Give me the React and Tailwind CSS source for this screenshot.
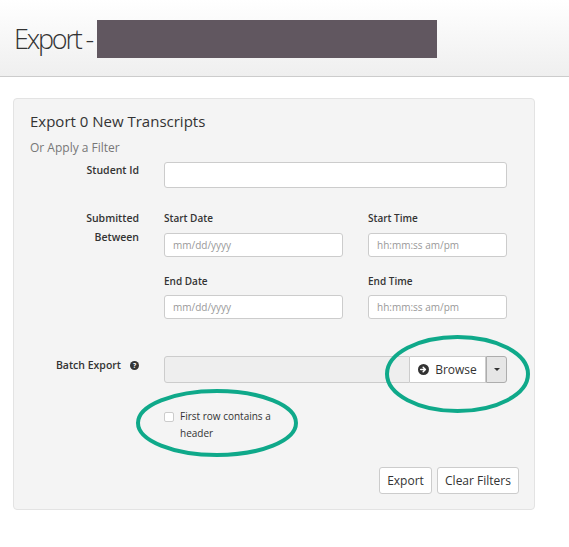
import React from "react";

function ArrowCircle() {
  return (
    <svg width="11" height="11" viewBox="0 0 16 16" className="shrink-0">
      <circle cx="8" cy="8" r="8" fill="#333" />
      <path d="M4 8h6.5M7.5 4.8 10.8 8 7.5 11.2" stroke="#fff" strokeWidth="2.2" fill="none" strokeLinecap="round" strokeLinejoin="round" />
    </svg>
  );
}

function HelpCircle() {
  return (
    <svg width="9" height="9" viewBox="0 0 16 16" className="shrink-0">
      <circle cx="8" cy="8" r="8" fill="#333" />
      <text x="8" y="12.3" textAnchor="middle" fontSize="12" fontWeight="700" fill="#fff" fontFamily="'Open Sans', sans-serif">?</text>
    </svg>
  );
}

function TextBox({ placeholder, className }) {
  return (
    <div className={`bg-white border border-[#ccc] rounded-[3px] flex items-center pl-[8px] text-[10px] text-[#999] ${className}`}>
      {placeholder}
    </div>
  );
}

function Label({ children, className = "" }) {
  return (
    <div className={`w-[109px] shrink-0 text-right text-[10.5px] font-semibold text-[#333] ${className}`}>
      {children}
    </div>
  );
}

export default function App() {
  return (
    <div className="relative w-[569px] h-[547px] bg-white font-['Open_Sans',sans-serif] text-[#333]">
      <header className="h-[77px] border-b border-[#ccc] bg-gradient-to-b from-white to-[#efefef] flex items-start pl-[14px] pt-[20px]">
        <h1 className="text-[27px] font-light leading-[38px] tracking-[-2.2px] text-[#333]">Export -</h1>
        <div className="ml-[5px] w-[340px] h-[38px] bg-[#615760]" />
      </header>

      <section className="ml-[13px] mt-[21px] w-[522px] h-[412px] bg-[#f4f4f4] border border-[#e3e3e3] rounded-[4px] pl-[16px] pr-[15px] pt-[12px]">
        <h2 className="text-[15px] leading-[21px] text-[#333]">Export 0 New Transcripts</h2>
        <p className="mt-[7px] text-[12px] leading-[17px] text-[#777]">Or Apply a Filter</p>

        <div className="mt-[6px] flex">
          <Label className="leading-[16px]">Student Id</Label>
          <div className="ml-[25px] w-[343px] h-[26px] bg-white border border-[#ccc] rounded-[3px]" />
        </div>

        <div className="mt-[21px] flex">
          <Label className="leading-[19px]">Submitted<br />Between</Label>
          <div className="ml-[25px] w-[343px] grid grid-cols-[179px_139px] gap-x-[25px]">
            <div>
              <div className="text-[10px] font-semibold leading-[19px]">Start Date</div>
              <TextBox placeholder="mm/dd/yyyy" className="mt-[5px] h-[24px]" />
            </div>
            <div>
              <div className="text-[10px] font-semibold leading-[19px]">Start Time</div>
              <TextBox placeholder="hh:mm:ss am/pm" className="mt-[5px] h-[24px]" />
            </div>
            <div className="mt-[15px]">
              <div className="text-[10px] font-semibold leading-[19px]">End Date</div>
              <TextBox placeholder="mm/dd/yyyy" className="mt-[4px] h-[24px]" />
            </div>
            <div className="mt-[15px]">
              <div className="text-[10px] font-semibold leading-[19px]">End Time</div>
              <TextBox placeholder="hh:mm:ss am/pm" className="mt-[4px] h-[24px]" />
            </div>
          </div>
        </div>

        <div className="mt-[37px] flex">
          <div className="w-[109px] shrink-0 flex justify-end items-center gap-[9px] h-[16px] mt-[1px]">
            <span className="text-[10.5px] font-semibold leading-[16px]">Batch Export</span>
            <HelpCircle />
          </div>
          <div className="ml-[25px] w-[343px] h-[27px] flex">
            <div className="flex-1 bg-[#eee] border border-[#ccc] rounded-l-[3px]" />
            <div className="w-[76px] bg-white border border-[#ccc] border-l-0 flex items-center justify-center gap-[6px] text-[12px]">
              <ArrowCircle />
              <span>Browse</span>
            </div>
            <div className="w-[21px] bg-[#e6e6e6] border border-[#adadad] rounded-r-[3px] flex items-center justify-center">
              <div className="w-0 h-0 border-l-[3px] border-r-[3px] border-t-[3px] border-l-transparent border-r-transparent border-t-[#333]" />
            </div>
          </div>
        </div>

        <div className="mt-[25px] ml-[134px] flex">
          <div className="mt-[4px] w-[10px] h-[10px] bg-white border border-[#ccc] rounded-[2px] shrink-0" />
          <div className="ml-[6px] w-[105px] text-[10px] leading-[17px] text-[#333]">First row contains a header</div>
        </div>

        <div className="mt-[25px] flex justify-end gap-[5px]">
          <button className="w-[53px] h-[27px] bg-white border border-[#ccc] rounded-[3px] text-[12px] text-[#333]">Export</button>
          <button className="w-[82px] h-[27px] bg-white border border-[#ccc] rounded-[3px] text-[12px] text-[#333]">Clear Filters</button>
        </div>
      </section>

      <svg className="absolute left-0 top-0 pointer-events-none" width="569" height="547">
        <ellipse cx="457.5" cy="374" rx="70.5" ry="37" fill="none" stroke="#0fa98a" strokeWidth="4" />
        <ellipse cx="217" cy="423" rx="79" ry="32" fill="none" stroke="#0fa98a" strokeWidth="4" />
      </svg>
    </div>
  );
}
